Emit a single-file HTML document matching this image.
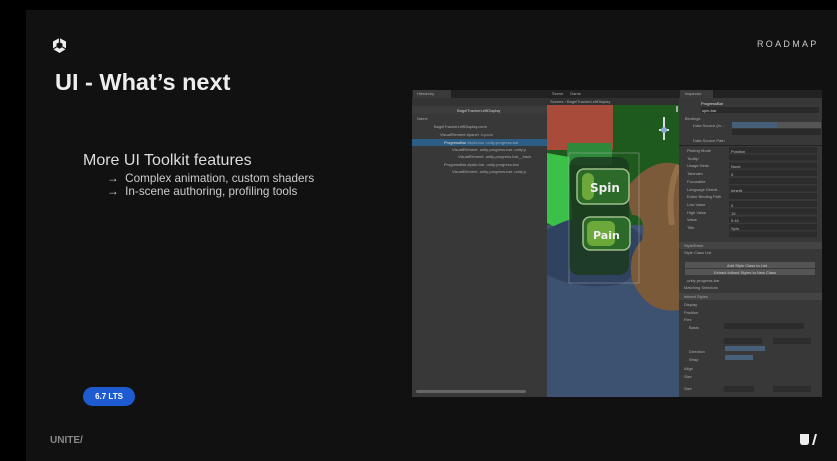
<!DOCTYPE html>
<html><head><meta charset="utf-8"><style>
*{margin:0;padding:0;box-sizing:border-box}
body{width:837px;height:461px;background:#000;position:relative;overflow:hidden;font-family:"Liberation Sans",sans-serif}
.slide{position:absolute;left:26px;top:10px;width:811px;height:451px;background:#111}
.a{position:absolute}
.t{font-size:4px;color:#aaa;white-space:nowrap;position:absolute}
</style></head><body>
<div class="slide"></div>
<svg class="a" style="left:51px;top:37px" width="17" height="17" viewBox="0 0 17 17"><path d="M8.5 1 L15 4.5 V12 L8.5 16 L2 12 V4.5Z" fill="#eee"/><path d="M8.5 5 L11.5 6.7 V10 L8.5 11.7 L5.5 10 V6.7Z" fill="#111"/><path d="M8.5 1V5 M2 12L5.5 10 M15 12L11.5 10" stroke="#111" stroke-width="1.2"/></svg>
<div class="a" style="left:55px;top:69px;font-size:23.5px;font-weight:bold;color:#eee">UI - What’s next</div>
<div class="a" style="left:757px;top:39px;font-size:9px;letter-spacing:2.3px;color:#ccc">ROADMAP</div>
<div class="a" style="left:83px;top:152px;font-size:16px;color:#ddd">More UI Toolkit features</div>
<div class="a" style="left:107px;top:172px;font-size:11.7px;color:#ccc;line-height:13px">→&nbsp; Complex animation, custom shaders<br>→&nbsp; In-scene authoring, profiling tools</div>
<div class="a" style="left:83px;top:387px;width:52px;height:19px;border-radius:10px;background:#1f5bd0;color:#fff;font-size:8px;font-weight:bold;text-align:center;line-height:19px">6.7 LTS</div>
<div class="a" style="left:50px;top:435px;font-size:10px;font-weight:bold;color:#888">UNITE/</div>
<svg class="a" style="left:800px;top:434px" width="18" height="12"><path d="M0 0H9V8Q9 11 6 11H3Q0 11 0 8Z" fill="#eee"/><path d="M12 11L15 0H17L14 11Z" fill="#eee"/></svg>

<div class="a" style="left:412px;top:90px;width:410px;height:307px;background:#282828;overflow:hidden">
 <div class="a" style="left:0;top:0;width:135px;height:307px;background:#383838">
  <div class="a" style="left:0;top:0;width:135px;height:8px;background:#222"></div>
  <div class="a" style="left:1px;top:0;width:38px;height:8px;background:#3a3a3a"></div>
  <div class="t" style="left:5px;top:1px">Hierarchy</div>
  <div class="a" style="left:0;top:8px;width:135px;height:8px;background:#333"></div>
  <div class="a" style="left:0;top:16px;width:135px;height:8px;background:#3c3c3c"></div>
  <div class="t" style="left:45px;top:18px;color:#ccc">BagelTrackerLeftDisplay</div>
  <div class="t" style="left:5px;top:26px">Name</div>
  <div class="t" style="left:22px;top:34px">BagelTrackerLeftDisplay.uxml</div>
  <div class="t" style="left:28px;top:42px">VisualElement #panel <span style="color:#999">.lt-pane</span></div>
  <div class="a" style="left:0;top:49px;width:135px;height:7px;background:#2c5d87"></div>
  <div class="t" style="left:32px;top:50px;color:#ddd">ProgressBar <span style="color:#9ab">#spin-bar .unity-progress-bar</span></div>
  <div class="t" style="left:40px;top:57px">VisualElement .unity-progress-bar .unity-p</div>
  <div class="t" style="left:46px;top:64px">VisualElement .unity-progress-bar__back</div>
  <div class="t" style="left:32px;top:72px">ProgressBar #pain-bar .unity-progress-bar</div>
  <div class="t" style="left:40px;top:79px">VisualElement .unity-progress-bar .unity-p</div>
  <div class="a" style="left:4px;top:300px;width:110px;height:3px;background:#666;border-radius:2px"></div>
 </div>
 <div class="a" style="left:135px;top:0;width:132px;height:307px;background:#3d5170;overflow:hidden">
  <div class="a" style="left:0;top:0;width:132px;height:8px;background:#222"></div>
  <div class="t" style="left:5px;top:1px">Scene &nbsp;&nbsp;&nbsp;&nbsp; Game</div>
  <div class="a" style="left:0;top:8px;width:132px;height:7px;background:#303030"></div>
  <div class="t" style="left:3px;top:9px">Scenes › BagelTrackerLeftDisplay</div>
  <svg class="a" style="left:0;top:15px" width="132" height="292" viewBox="0 0 132 292">
   <rect x="0" y="0" width="132" height="292" fill="#3d5170"/>
   <rect x="0" y="0" width="132" height="120" fill="#1e5a1e"/>
   <rect x="0" y="0" width="66" height="45" fill="#a84b3a"/>
   <rect x="20" y="38" width="45" height="22" fill="#2e8a3a"/>
   <path d="M0 48 L22 52 L25 115 L14 125 L0 118Z" fill="#3bc04a"/>
   <path d="M0 125 Q50 95 95 130 Q100 170 70 180 Q30 185 0 170Z" fill="#2f4260"/>
   <path d="M78 85 Q105 50 132 60 V205 Q100 210 85 175 Q80 150 95 135 Q100 110 85 110Z" fill="#7b5a3a"/>
   <path d="M132 60 Q120 85 125 120" stroke="#a37f55" stroke-width="6" fill="none" opacity=".6"/>
   <rect x="22" y="52" width="60" height="118" rx="10" fill="#1b3a1e" opacity=".85"/>
   <rect x="30" y="64" width="52" height="35" rx="7" fill="#2c6a2a" stroke="#9fbf8a" stroke-width="1.5"/>
   <rect x="35" y="68" width="12" height="27" rx="6" fill="#6da83a"/>
   <rect x="36" y="112" width="47" height="33" rx="7" fill="#2c6a2a" stroke="#9fbf8a" stroke-width="1.5"/>
   <rect x="40" y="116" width="28" height="25" rx="6" fill="#6da83a"/>
   <text x="43" y="87" font-family="DejaVu Sans" font-size="12" font-weight="bold" fill="#eee">Spin</text>
   <text x="46" y="134" font-family="DejaVu Sans" font-size="11" font-weight="bold" fill="#eee">Pain</text>
   <rect x="22" y="48" width="70" height="130" fill="none" stroke="#bbb" stroke-width=".4"/>
   <g stroke="#ddd" stroke-width="2"><path d="M112 25 H122 M117 12 V35"/></g>
   <circle cx="117" cy="25" r="3" fill="#8ac"/>
  </svg>
  <div class="a" style="left:129px;top:16px;width:2px;height:6px;background:#aaa"></div>
 </div>
 <div class="a" style="left:267px;top:0;width:143px;height:307px;background:#383838">
  <div class="a" style="left:0;top:0;width:143px;height:8px;background:#222"></div>
  <div class="a" style="left:1px;top:0;width:33px;height:8px;background:#3a3a3a"></div>
  <div class="t" style="left:6px;top:1px">Inspector</div>
  <div class="t" style="left:22px;top:11px;color:#ddd">ProgressBar</div>
  <div class="a" style="left:22px;top:17px;width:118px;height:6px;background:#2a2a2a"></div>
  <div class="t" style="left:23px;top:18px;color:#ccc">spin-bar</div>
  <div class="t" style="left:6px;top:26px">Bindings</div>
  <div class="t" style="left:14px;top:33px">Data Source (in...</div>
  <div class="a" style="left:53px;top:32px;width:45px;height:6px;background:#46607a"></div>
  <div class="a" style="left:98px;top:32px;width:44px;height:6px;background:#555"></div>
  <div class="a" style="left:53px;top:39px;width:89px;height:6px;background:#2a2a2a"></div>
  <div class="t" style="left:14px;top:48px">Data Source Path</div>
  <div class="a" style="left:0;top:55px;width:143px;height:1px;background:#222"></div>
  <div class="t" style="left:8px;top:57px;line-height:7.7px">Picking Mode<br>Tooltip<br>Usage Hints<br>Tabindex<br>Focusable<br>Language Directi...<br>Editor Binding Path<br>Low Value<br>High Value<br>Value<br>Title</div>
  <div class="a" style="left:50px;top:57px;width:88px;height:91px;background:repeating-linear-gradient(#2c2c2c 0 6px,transparent 6px 7.7px)"></div>
  <div class="t" style="left:52px;top:58px;color:#bbb;line-height:7.7px">Position<br>&nbsp;<br>None<br>0<br>&nbsp;<br>Inherit<br>&nbsp;<br>0<br>15<br>5.44<br>Spin</div>
  <div class="a" style="left:0;top:152px;width:143px;height:7px;background:#444"></div>
  <div class="t" style="left:5px;top:153px">StyleSheet</div>
  <div class="t" style="left:5px;top:160px">Style Class List</div>
  <div class="a" style="left:6px;top:172px;width:130px;height:6px;background:#555"></div>
  <div class="t" style="left:48px;top:173px;color:#ccc">Add Style Class to List</div>
  <div class="a" style="left:6px;top:179px;width:130px;height:6px;background:#555"></div>
  <div class="t" style="left:35px;top:180px;color:#ccc">Extract Inlined Styles to New Class</div>
  <div class="t" style="left:7px;top:188px">.unity-progress-bar</div>
  <div class="t" style="left:5px;top:195px">Matching Selectors</div>
  <div class="a" style="left:0;top:203px;width:143px;height:7px;background:#444"></div>
  <div class="t" style="left:5px;top:204px">Inlined Styles</div>
  <div class="t" style="left:5px;top:211px;line-height:7.5px">Display<br>Position<br>Flex</div>
  <div class="t" style="left:10px;top:234px;line-height:8px">Basis<br><br><br>Direction<br>Wrap</div>
  <div class="a" style="left:45px;top:233px;width:80px;height:6px;background:#2c2c2c"></div>
  <div class="a" style="left:45px;top:248px;width:38px;height:6px;background:#2c2c2c"></div>
  <div class="a" style="left:94px;top:248px;width:38px;height:6px;background:#2c2c2c"></div>
  <div class="a" style="left:46px;top:256px;width:40px;height:5px;background:#46607a"></div>
  <div class="a" style="left:46px;top:265px;width:28px;height:5px;background:#46607a"></div>
  <div class="t" style="left:5px;top:275px;line-height:7.5px">Align<br>Size</div>
  <div class="t" style="left:5px;top:296px">Size</div>
  <div class="a" style="left:45px;top:296px;width:30px;height:6px;background:#2c2c2c"></div>
  <div class="a" style="left:94px;top:296px;width:38px;height:6px;background:#2c2c2c"></div>
 </div>
</div>
</body></html>
